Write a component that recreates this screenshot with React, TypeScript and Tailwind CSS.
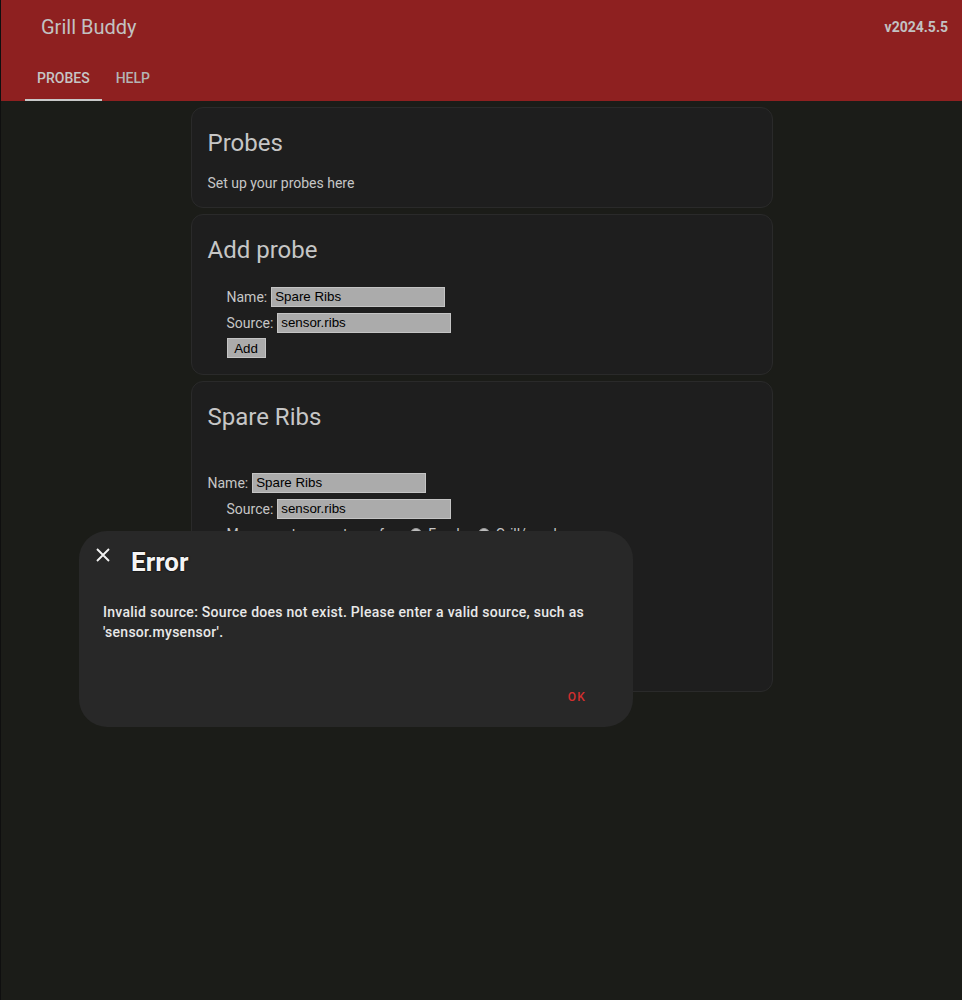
import React from "react";

const inputCls =
  "h-[20px] w-[174px] bg-[#ababab] border border-[#c4c4c4] px-[3px] text-[13.33px] text-black [font-family:'Liberation_Sans',Arial,sans-serif] outline-none";

function Row({ indent, label, value }: { indent?: boolean; label: string; value: string }) {
  return (
    <div className={`flex h-[20px] items-center gap-[4px] ${indent ? "pl-[19px]" : ""}`}>
      <span>{label}</span>
      <input className={inputCls} defaultValue={value} readOnly />
    </div>
  );
}

function Card({ children, className = "" }: { children: React.ReactNode; className?: string }) {
  return (
    <div className={`rounded-[12px] border border-[#2a2a2a] bg-[#1e1e1e] px-[16px] pt-[19px] ${className}`}>
      {children}
    </div>
  );
}

export default function App() {
  return (
    <div className="relative min-h-[1000px] border-l border-[#0f0f0f] bg-[#1b1c18] [font-family:Roboto,'Noto_Sans',sans-serif] text-[14px] leading-[20px] text-[#c6c6c6]">
      <header className="bg-[#8e2020]">
        <div className="flex h-[54px] items-center justify-between pl-[40px] pr-[14px]">
          <span className="text-[20px] leading-[28px] text-[#c2c2c2]">Grill Buddy</span>
          <span className="text-[14px] font-bold leading-[20px] text-[#c2c2c2]">v2024.5.5</span>
        </div>
        <nav className="flex h-[47px] gap-[2px] pl-[24px]">
          <div className="flex h-full items-center border-b-2 border-[#c8c8c8] px-[12px] pt-[2px] text-[14px] font-medium text-[#c6c6c6]">
            PROBES
          </div>
          <div className="flex h-full items-center border-b-2 border-transparent px-[12px] pt-[2px] text-[14px] font-medium text-[#b4b4b4]">
            HELP
          </div>
        </nav>
      </header>

      <main className="mx-auto mt-[6px] flex w-[582px] flex-col gap-[6px]">
        <Card className="pb-[14px]">
          <h2 className="text-[24px] leading-[32px] text-[#c6c6c6]">Probes</h2>
          <p className="mt-[14px]">Set up your probes here</p>
        </Card>

        <Card className="pb-[16px]">
          <h2 className="text-[24px] leading-[32px] text-[#c6c6c6]">Add probe</h2>
          <div className="mt-[21px] flex flex-col gap-[5.5px]">
            <Row indent label="Name:" value="Spare Ribs" />
            <Row indent label="Source:" value="sensor.ribs" />
            <div className="flex h-[20px] items-center pl-[19px]">
              <button className="h-[20px] w-[39px] border border-[#c4c4c4] bg-[#ababab] text-[13.33px] text-black [font-family:'Liberation_Sans',Arial,sans-serif]">
                Add
              </button>
            </div>
          </div>
        </Card>

        <Card className="pb-[19px]">
          <h2 className="text-[24px] leading-[32px] text-[#c6c6c6]">Spare Ribs</h2>
          <div className="mt-[40px] flex flex-col gap-[5.5px]">
            <Row label="Name:" value="Spare Ribs" />
            <Row indent label="Source:" value="sensor.ribs" />
            <div className="flex h-[20px] items-center pl-[19px]">
              <span>Measures temperature of:</span>
              <span className="ml-[23px] inline-block h-[12px] w-[12px] rounded-full border border-[#9a9a9a] bg-[#bdbdbd]" />
              <span className="ml-[6px]">Food</span>
              <span className="ml-[18px] inline-block h-[12px] w-[12px] rounded-full border border-[#9a9a9a] bg-[#bdbdbd]" />
              <span className="ml-[6px]">Grill/smoker</span>
            </div>
            <div className="h-[122px]" />
          </div>
        </Card>
      </main>

      <div className="absolute left-[78px] top-[531px] h-[196px] w-[554px] rounded-[28px] bg-[#282828] px-[24px] pt-[15px]">
        <div className="flex items-start">
          <svg width="14" height="14" viewBox="0 0 14 14" className="-ml-[7px] mt-[2px]">
            <path d="M1 1 L13 13 M13 1 L1 13" stroke="#f2f2f2" strokeWidth="1.9" strokeLinecap="butt" />
          </svg>
          <h1 className="ml-[21px] text-[26px] font-bold leading-[32px] text-[#f4f4f4] [text-shadow:0_0_2px_#000,0_0_1px_#000]">
            Error
          </h1>
        </div>
        <p className="mt-[24px] pr-[20px] text-[14px] font-medium leading-[20px] tracking-[0.28px] text-[#e8e8e8]">
          Invalid source: Source does not exist. Please enter a valid source, such as 'sensor.mysensor'.
        </p>
        <div className="mt-[47px] flex justify-end pr-[23px]">
          <span className="text-[12px] font-medium leading-[16px] tracking-[1.25px] text-[#d32f2f]">OK</span>
        </div>
      </div>
    </div>
  );
}
